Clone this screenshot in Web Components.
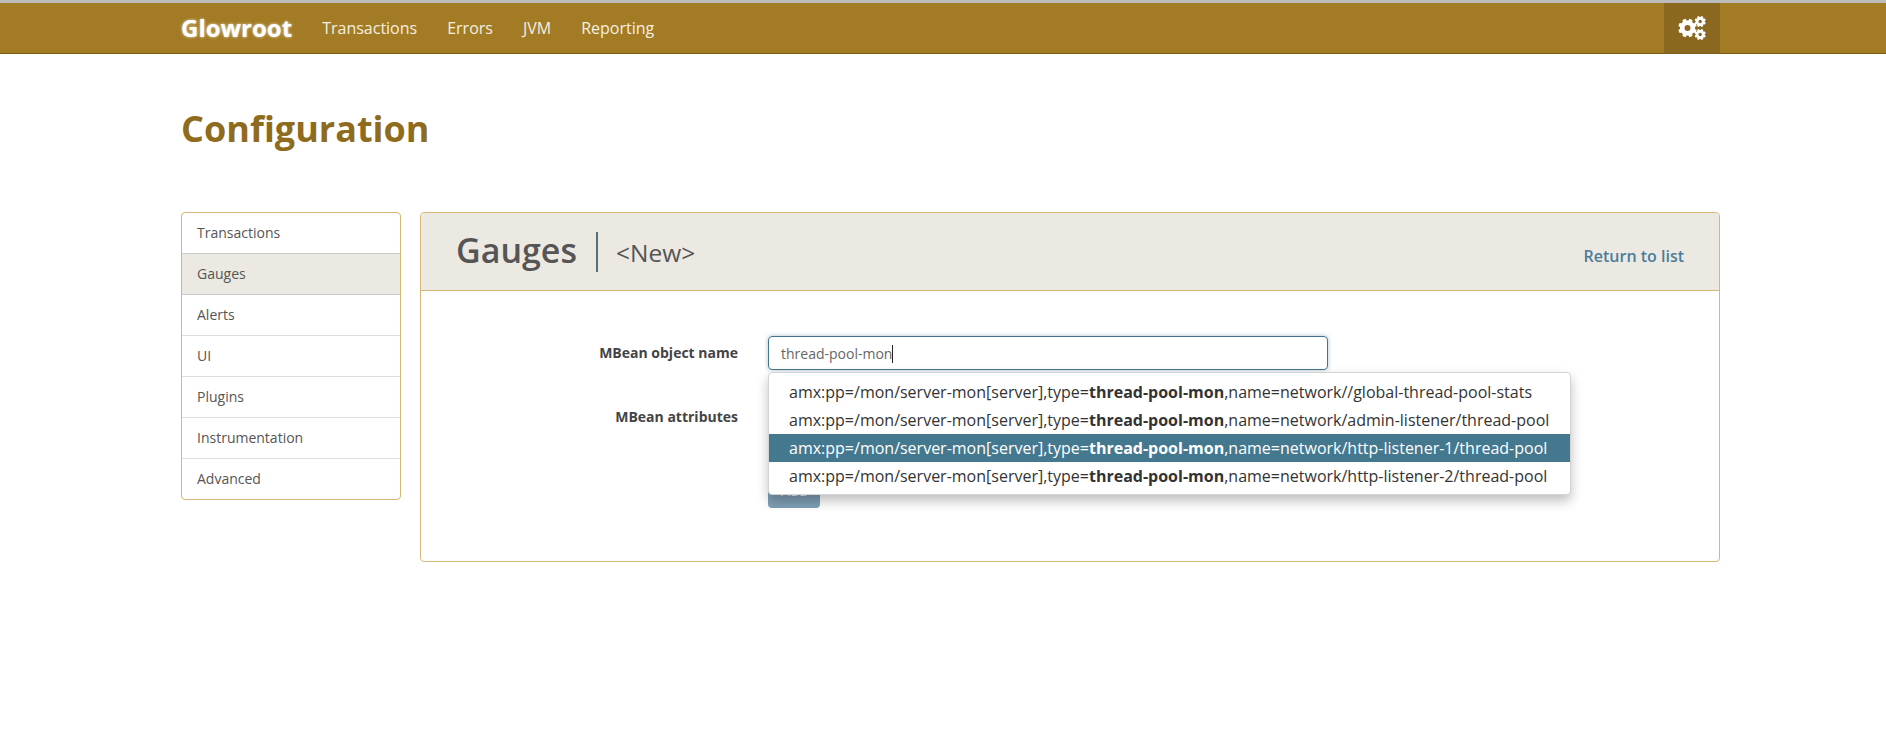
<!DOCTYPE html>
<html><head><meta charset="utf-8">
<style>
html,body{margin:0;padding:0;background:#fff;font-family:"Open Sans",sans-serif;color:#555}
</style></head><body>
<gr-navbar>
  <gr-nav-link>Transactions</gr-nav-link><gr-nav-link>Errors</gr-nav-link><gr-nav-link>JVM</gr-nav-link><gr-nav-link>Reporting</gr-nav-link>
</gr-navbar>
<gr-page>
  <gr-sidebar slot="side">
    <gr-side-item>Transactions</gr-side-item>
    <gr-side-item active>Gauges</gr-side-item>
    <gr-side-item>Alerts</gr-side-item>
    <gr-side-item>UI</gr-side-item>
    <gr-side-item>Plugins</gr-side-item>
    <gr-side-item>Instrumentation</gr-side-item>
    <gr-side-item>Advanced</gr-side-item>
  </gr-sidebar>
  <gr-panel slot="main">
    <gr-form></gr-form>
  </gr-panel>
</gr-page>
<script>
function def(name, html){
  customElements.define(name, class extends HTMLElement{
    constructor(){super();this.attachShadow({mode:'open'}).innerHTML=html;}
  });
}
const GEAR=(cx,cy,r,h,n)=>{
  let d='';const step=Math.PI*2/n;
  for(let i=0;i<n;i++){
    const a=i*step+step/2,w=step*0.28;
    const pts=[[r*0.8,a-w*1.25],[r,a-w*.8],[r,a+w*.8],[r*0.8,a+w*1.25]];
    pts.forEach((p,j)=>{d+=(i==0&&j==0?'M':'L')+(cx+p[0]*Math.cos(p[1])).toFixed(2)+' '+(cy+p[0]*Math.sin(p[1])).toFixed(2);});
  }
  d+='Z M'+(cx+h)+' '+cy+'a'+h+' '+h+' 0 1 0 '+(-2*h)+' 0a'+h+' '+h+' 0 1 0 '+(2*h)+' 0Z';
  return d;
};
def('gr-navbar',`<style>
:host{display:block;height:54px;box-sizing:border-box;border-top:3px solid #bcbcbc;border-bottom:1px solid #7a5b12;background:#a27b24}
.c{display:flex;align-items:stretch;height:50px;margin:0 166px 0 181px}
.logo{font:700 24px/50px "Open Sans",sans-serif;color:#fff;text-shadow:0 0 3px rgba(255,255,255,.8);margin-right:30px}
nav{display:flex;gap:30px;flex:1}
.gear{width:56px;background:#8a6820;display:flex;align-items:center;justify-content:center}
</style><div class="c"><div class="logo">Glowroot</div><nav><slot></slot></nav>
<div class="gear"><svg width="28" height="26" viewBox="0 0 28 26" fill="#fff" fill-rule="evenodd"><path d="${GEAR(9.5,13,9.4,3,8)}"/><path d="${GEAR(22.2,6.5,5.7,1.7,8)}"/><path d="${GEAR(22.2,19.5,5.7,1.7,8)}"/></svg></div></div>`);
def('gr-nav-link',`<style>:host{display:block;font:400 16px/50px "Open Sans",sans-serif;color:#f5efe0}</style><slot></slot>`);
def('gr-page',`<style>
:host{display:block;padding:0 166px 0 181px}
h1{margin:0;font:700 36px/50px "Open Sans",sans-serif;color:#8f6b1e;padding:50px 0 58px}
.row{display:grid;grid-template-columns:220px 1fr;column-gap:19px;align-items:start}
</style><h1>Configuration</h1><div class="row"><slot name="side"></slot><slot name="main"></slot></div>`);
def('gr-sidebar',`<style>
:host{display:block;border:1px solid #d6b874;border-radius:4px;overflow:hidden;background:#fff}
</style><slot></slot>`);
def('gr-side-item',`<style>
:host{display:block;height:40px;padding:0 15px;font:400 14px/40px "Open Sans",sans-serif;color:#555;border-top:1px solid #ddd}
:host(:first-child){border-top:0}
:host([active]){background:#ece9e2;border-top-color:#ccc;box-shadow:0 1px 0 #ccc;position:relative}
</style><slot></slot>`);
def('gr-panel',`<style>
:host{display:block;border:1px solid #d6b874;border-radius:4px;background:#fff;height:350px;box-sizing:border-box}
header{height:78px;box-sizing:border-box;background:#ece9e2;border-bottom:1px solid #d6b874;display:flex;align-items:center;padding:0 35px 0 35px;border-radius:3px 3px 0 0}
h2{margin:0;font:600 34px/46px "Open Sans",sans-serif;color:#555;padding-bottom:3px}
.sep{width:2px;height:40px;background:#5a6d7a;margin:1px 18px 0 19px}
.sub{font:400 24.5px/46px "Open Sans",sans-serif;color:#555;padding-top:3px;flex:1}
a{font:600 16px/24px "Open Sans",sans-serif;color:#4a7d9b;text-decoration:none;padding-top:8px}
</style><header><h2>Gauges</h2><div class="sep"></div><div class="sub">&lt;New&gt;</div><a>Return to list</a></header><slot></slot>`);
const pre='amx:pp=/mon/server-mon[server],type=';
const rows=[',name=network//global-thread-pool-stats',',name=network/admin-listener/thread-pool',',name=network/http-listener-1/thread-pool',',name=network/http-listener-2/thread-pool'];
def('gr-form',`<style>
:host{display:block;padding:45px 0 0 0}
.row{display:grid;grid-template-columns:317px 1fr;column-gap:30px;align-items:center}
label{font:700 14px/20px "Open Sans",sans-serif;color:#444;text-align:right}
.field{position:relative}
.input{width:560px;height:34px;box-sizing:border-box;border:1px solid #44758f;border-radius:4px;padding:1px 12px 0;font:400 14px/32px "Open Sans",sans-serif;color:#666;box-shadow:0 0 4px rgba(68,117,143,.45);display:flex;align-items:center}
.caret{display:inline-block;width:1px;height:18px;background:#222}
.menu{position:absolute;left:0;top:36px;width:803px;box-sizing:border-box;border:1px solid #d4d4d4;border-radius:4px;background:#fff;box-shadow:0 6px 12px rgba(0,0,0,.25);padding:5px 0 0;z-index:2}
.menu div{height:28px;padding:0 20px;font:400 16px/28px "Open Sans",sans-serif;color:#333;white-space:nowrap}
.menu div.on{background:#44788f;color:#fff}
.menu div:last-child{height:32px}
.row2{margin-top:37px}
.btn{display:block;width:52px;height:34px;box-sizing:border-box;margin:47px 0 0 347px;background:#7e9fb5;border-radius:4px;color:#fff;font:400 14px/34px "Open Sans",sans-serif;text-align:center}
</style>
<div class="row"><label>MBean object name</label><div class="field"><div class="input">thread-pool-mon<span class="caret"></span></div>
<div class="menu">${rows.map((r,i)=>`<div class="${i==2?'on':''}">${pre}<b>thread-pool-mon</b>${r}</div>`).join('')}</div></div></div>
<div class="row row2"><label>MBean attributes</label><div></div></div>
<div class="btn">Add</div>`);
</script>
</body></html>
